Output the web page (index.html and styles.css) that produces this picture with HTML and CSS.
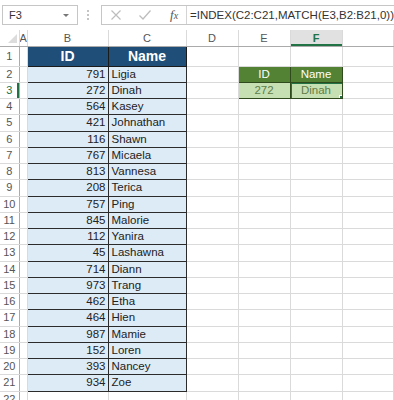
FILE: index.html
```html
<!DOCTYPE html>
<html>
<head>
	<title>INDEX MATCH</title>
	<meta charset="utf-8">
	<link rel="stylesheet" href="styles.css">
</head>
<body>
<div class="bar">
	<div class="namebox"><span>F3</span><i class="caret"></i></div>
	<div class="grip"><b></b><b></b><b></b></div>
	<div class="fbox">
		<div class="icons">
			<svg class="ico" width="12" height="12" viewBox="0 0 12 12"><path d="M1.5 1.5L10.5 10.5M10.5 1.5L1.5 10.5" stroke="#bdbdbd" stroke-width="1.2" fill="none"/></svg>
			<svg class="ico" width="14" height="12" viewBox="0 0 14 12"><path d="M1.5 6.5L5 10L12.5 1.5" stroke="#bdbdbd" stroke-width="1.3" fill="none"/></svg>
			<span class="fx">f<small>x</small></span>
		</div>
		<div class="formula">=INDEX(C2:C21,MATCH(E3,B2:B21,0))</div>
	</div>
</div>
<table class="sheet">
	<colgroup>
		<col class="w-rh"><col class="w-a"><col class="w-b"><col class="w-c"><col class="w-d"><col class="w-d"><col class="w-d"><col>
	</colgroup>
	<thead>
		<tr class="colhd">
			<th class="corner"><i></i></th><th>A</th><th>B</th><th>C</th><th>D</th><th>E</th><th class="on">F</th><th></th>
		</tr>
	</thead>
	<tbody>
		<tr class="r1"><th>1</th><td></td><td class="hd">ID</td><td class="hd">Name</td><td></td><td></td><td></td><td></td></tr>
		<tr><th>2</th><td></td><td class="id">791</td><td class="nm">Ligia</td><td></td><td class="gh">ID</td><td class="gh">Name</td><td></td></tr>
		<tr><th class="on">3</th><td></td><td class="id">272</td><td class="nm">Dinah</td><td></td><td class="gd">272</td><td class="gd sel">Dinah</td><td></td></tr>
		<tr><th>4</th><td></td><td class="id">564</td><td class="nm">Kasey</td><td></td><td></td><td></td><td></td></tr>
		<tr><th>5</th><td></td><td class="id">421</td><td class="nm">Johnathan</td><td></td><td></td><td></td><td></td></tr>
		<tr><th>6</th><td></td><td class="id">116</td><td class="nm">Shawn</td><td></td><td></td><td></td><td></td></tr>
		<tr><th>7</th><td></td><td class="id">767</td><td class="nm">Micaela</td><td></td><td></td><td></td><td></td></tr>
		<tr><th>8</th><td></td><td class="id">813</td><td class="nm">Vannesa</td><td></td><td></td><td></td><td></td></tr>
		<tr><th>9</th><td></td><td class="id">208</td><td class="nm">Terica</td><td></td><td></td><td></td><td></td></tr>
		<tr><th>10</th><td></td><td class="id">757</td><td class="nm">Ping</td><td></td><td></td><td></td><td></td></tr>
		<tr><th>11</th><td></td><td class="id">845</td><td class="nm">Malorie</td><td></td><td></td><td></td><td></td></tr>
		<tr><th>12</th><td></td><td class="id">112</td><td class="nm">Yanira</td><td></td><td></td><td></td><td></td></tr>
		<tr><th>13</th><td></td><td class="id">45</td><td class="nm">Lashawna</td><td></td><td></td><td></td><td></td></tr>
		<tr><th>14</th><td></td><td class="id">714</td><td class="nm">Diann</td><td></td><td></td><td></td><td></td></tr>
		<tr><th>15</th><td></td><td class="id">973</td><td class="nm">Trang</td><td></td><td></td><td></td><td></td></tr>
		<tr><th>16</th><td></td><td class="id">462</td><td class="nm">Etha</td><td></td><td></td><td></td><td></td></tr>
		<tr><th>17</th><td></td><td class="id">464</td><td class="nm">Hien</td><td></td><td></td><td></td><td></td></tr>
		<tr><th>18</th><td></td><td class="id">987</td><td class="nm">Mamie</td><td></td><td></td><td></td><td></td></tr>
		<tr><th>19</th><td></td><td class="id">152</td><td class="nm">Loren</td><td></td><td></td><td></td><td></td></tr>
		<tr><th>20</th><td></td><td class="id">393</td><td class="nm">Nancey</td><td></td><td></td><td></td><td></td></tr>
		<tr><th>21</th><td></td><td class="id">934</td><td class="nm">Zoe</td><td></td><td></td><td></td><td></td></tr>
		<tr><th>22</th><td></td><td></td><td></td><td></td><td></td><td></td><td></td></tr>
	</tbody>
</table>
</body>
</html>
```

FILE: styles.css
```css
body{margin:0;background:#fff;font-family:"Liberation Sans",Arial,sans-serif;color:#222;overflow:hidden;}

/* formula bar */
.bar{display:flex;align-items:center;height:30px;padding-left:2px;}
.namebox{display:flex;align-items:center;justify-content:space-between;box-sizing:border-box;width:85px;height:20px;border:1px solid #c6c6c6;padding:0 8px 0 6px;font-size:11px;color:#333;}
.caret{border-left:3px solid transparent;border-right:3px solid transparent;border-top:3px solid #777;}
.grip{display:flex;flex-direction:column;gap:2px;margin:0 12px 0 9px;}
.grip b{display:block;width:2px;height:2px;background:#c4c4c4;}
.fbox{flex:1;display:flex;box-sizing:border-box;height:20px;border:1px solid #c6c6c6;border-right:0;}
.icons{display:flex;align-items:center;box-sizing:border-box;width:84px;padding-left:8px;}
.icons .ico{margin-right:16px;}
.fx{font-family:"Liberation Serif",serif;font-style:italic;font-size:13px;color:#555;margin-left:2px;}
.fx small{font-size:10px;}
.formula{border-left:1px solid #d4d4d4;padding-left:3px;font-size:11.5px;line-height:18px;color:#333;white-space:nowrap;}

/* grid */
.sheet{table-layout:fixed;border-collapse:collapse;width:394px;font-size:11px;}
.w-rh{width:19px;}
.w-a{width:8px;}
.w-b{width:81px;}
.w-c{width:78px;}
.w-d{width:52px;}
.sheet td,.sheet th{padding:0;height:15.25px;line-height:15px;border:1px solid #dadada;white-space:nowrap;overflow:hidden;}
.sheet th{font-weight:normal;color:#555;text-align:center;}
.sheet tr > :first-child{border-left:0;}
.colhd th{height:16px;border-top:0;border-bottom-color:#ababab;}
.sheet tbody th{border-right-color:#ababab;}
.colhd th.on{background:#e1e1e1;color:#217346;font-weight:bold;box-shadow:inset 0 -2px #217346;}
.sheet tbody th.on{color:#217346;box-shadow:inset -2px 0 #217346;}
.corner{position:relative;}
.corner i{position:absolute;right:2px;bottom:3px;border-left:9px solid transparent;border-bottom:9px solid #dcdcdc;}
.r1 td,.r1 th{height:18.5px;}

/* data table */
.hd{background:#1f4e78;color:#fff;font-weight:bold;font-size:14px;text-align:center;border:1px solid #1b1b1b !important;}
.id,.nm{background:#ddebf7;border:1px solid #2b2b2b !important;font-size:11.5px;color:#222;}
.id{text-align:right;padding-right:2px !important;}
.nm{padding-left:3px !important;}

/* lookup result */
.gh{background:#548235;color:#fff;text-align:center;font-size:11.5px;border:1px solid #2f4a1c !important;}
.gd{background:#c6e0b4;color:#5f7d48;text-align:center;font-size:11.5px;border:1px solid #2f4a1c !important;}
.sel{position:relative;}
.sel::after{content:"";position:absolute;left:-1px;top:-1px;right:-2px;bottom:-2px;border:2px solid #217346;}
.sel::before{content:"";position:absolute;right:-4px;bottom:-4px;width:5px;height:5px;background:#217346;border:1px solid #fff;z-index:1;}
```
